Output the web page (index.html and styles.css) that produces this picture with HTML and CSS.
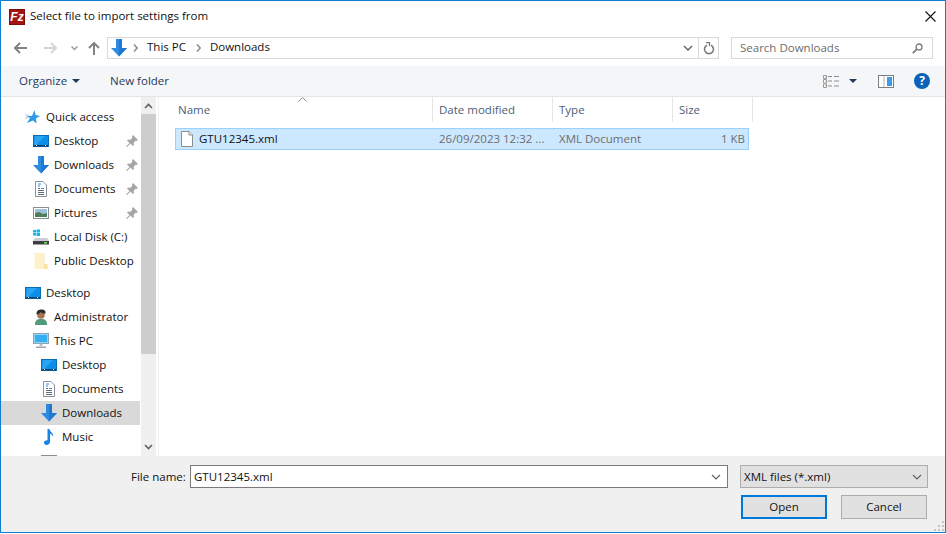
FILE: index.html
```html
<!DOCTYPE html>
<html lang="en">

<head>
    <meta charset="UTF-8">
    <meta name="viewport" content="width=device-width, initial-scale=1.0">
    <title>Select file to import settings from</title>
    <link rel="stylesheet" href="styles.css">
</head>

<body>
    <svg class="iconDefs" aria-hidden="true">
        <symbol id="i-down" viewBox="0 0 16 18">
            <path d="M5 0h6v9h5l-8 8.500-8-8.500h5z" fill="#2f8be0"/>
            <path d="M8 0h3v9h5l-8 8.500z" fill="#1f78d1"/>
        </symbol>
        <symbol id="i-desktop" viewBox="0 0 16 12">
            <rect x="0.500" y="0.500" width="15" height="11" fill="#0c8fe8" stroke="#0a6bb0"/>
            <path d="M2 1h10L3 10H1z" fill="#2aa5f2"/>
            <path d="M1 10h14v1.500H1z" fill="#0a3f6e"/>
            <path d="M3 10.500h1M12 10.500h1" stroke="#fff"/>
        </symbol>
        <symbol id="i-doc" viewBox="0 0 12 16">
            <path d="M.5.500h7.500l3.500 3.500v11.500H.5z" fill="#fff" stroke="#8a9097"/>
            <path d="M3 3h3M3 5h2M6 7.500h3" stroke="#2f8be0"/>
            <path d="M3 7.500h2M3 9.500h6M3 11.500h6M3 13.500h6" stroke="#5f6b78"/>
        </symbol>
        <symbol id="i-pics" viewBox="0 0 16 12">
            <rect x="0.500" y="0.500" width="15" height="11" fill="#fff" stroke="#8a8f94"/>
            <rect x="2" y="2" width="12" height="8" fill="#9cc3dc"/>
            <path d="M2 6l4-1 4 2 4-1v4H2z" fill="#4f7f5a"/>
        </symbol>
        <symbol id="i-disk" viewBox="0 0 16 16">
            <path d="M0 1h3v2.500H0zM3.500.500H7v3H3.500zM0 4h3v2.500H0zM3.500 4H7v3H3.500z" fill="#19b3e6"/>
            <path d="M2 9h12l2 3H0z" fill="#c9ced2"/>
            <rect x="0" y="12" width="16" height="3.500" fill="#3c4043"/>
            <rect x="11" y="13" width="3" height="1.500" fill="#6fe06a"/>
        </symbol>
        <symbol id="i-public" viewBox="0 0 13 16">
            <path d="M0 0h9.500v11H13v5H0z" fill="#fdf1c9"/>
            <path d="M9.500 11H13v5H9.500z" fill="#f5e3a6"/>
            <path d="M9.500 0v11" stroke="#f3e6bb"/>
        </symbol>
        <symbol id="i-user" viewBox="0 0 14 16">
            <path d="M1 16c0-5 2-6 6-6s6 1 6 6z" fill="#4f9a78"/>
            <circle cx="7" cy="6" r="3.800" fill="#a8734f"/>
            <path d="M2.500 5.500C2.500 1 5 .500 7.500.500c3 0 4.500 1.500 4 4-2 0-4-.500-5-1.500-.500 1-2 2.500-4 2.500z" fill="#2b2b2b"/>
        </symbol>
        <symbol id="i-pc" viewBox="0 0 16 16">
            <rect x="0.500" y="0.500" width="15" height="10" fill="#8fd3f7" stroke="#8ea3b3"/>
            <path d="M2 2h12v7H2z" fill="#33b0f0"/>
            <path d="M6.500 11h3v2h-3z" fill="#b9c2c9"/>
            <path d="M3 13.500h10V15H3z" fill="#9aa5ad"/>
        </symbol>
        <symbol id="i-music" viewBox="0 0 10 16">
            <path d="M3.500 0h2c.3 3 4.200 3.500 3.700 8-.7-2-2-3-3.200-3.300V13c0 2-2 3-3.500 3S0 15 0 13.500 1.800 11 3.500 11.300z" fill="#1584e6"/>
        </symbol>
        <symbol id="i-pin" viewBox="0 0 12 12">
            <path d="M7 0l5 5-1 1-1-.500-2.500 2.500.500 2-1 1-2.500-2.500L1 12l-1-.500 3.500-3.500L1 5.500l1-1 2 .500L6.500 2.500 6 1.500z" fill="#a3a6a9"/>
        </symbol>
        <symbol id="i-crumb" viewBox="0 0 5 8">
            <path d="M1 .5L4.200 4 1 7.500" fill="none" stroke="#8a8a8a" stroke-width="1.500"/>
        </symbol>
    </svg>

    <div class="window">
        <header class="titleBar">
            <span class="appLogo">Fz</span>
            <span class="titleText">Select file to import settings from</span>
            <svg class="closeIcon" width="11" height="11" viewBox="0 0 11 11"><path d="M.5.500l10 10M10.500.500l-10 10" stroke="#111" stroke-width="1.100"/></svg>
        </header>

        <div class="navRow">
            <svg class="navBtn navBack" width="13" height="12" viewBox="0 0 13 12"><path d="M6 1L1 6l5 5M1 6h12" fill="none" stroke="#7f8387" stroke-width="2"/></svg>
            <svg class="navBtn navForward" width="13" height="12" viewBox="0 0 13 12"><path d="M7 1l5 5-5 5M12 6H0" fill="none" stroke="#d2d4d6" stroke-width="2"/></svg>
            <svg class="navBtn navRecent" width="7" height="5" viewBox="0 0 7 5"><path d="M.5.500l3 3 3-3" fill="none" stroke="#9a9ea2" stroke-width="1.500"/></svg>
            <svg class="navBtn navUp" width="12" height="13" viewBox="0 0 12 13"><path d="M1 6l5-5 5 5M6 1v12" fill="none" stroke="#7f8387" stroke-width="2"/></svg>
            <div class="addressBox">
                <svg class="addressIcon" width="16" height="18"><use href="#i-down"/></svg>
                <svg class="crumbArrow" width="5" height="8"><use href="#i-crumb"/></svg>
                <span class="crumb">This PC</span>
                <svg class="crumbArrow" width="5" height="8"><use href="#i-crumb"/></svg>
                <span class="crumb">Downloads</span>
                <svg class="addressChevron" width="10" height="6" viewBox="0 0 10 6"><path d="M1 1l4 4 4-4" fill="none" stroke="#6a6a6a" stroke-width="1.500"/></svg>
                <span class="refreshBtn">
                    <svg width="12" height="13" viewBox="0 0 12 13"><path d="M4 3.200a4.500 4.500 0 1 0 4 0" fill="none" stroke="#7a7a7a" stroke-width="1.600"/><path d="M3 .5h3.500V4" fill="none" stroke="#7a7a7a" stroke-width="1.300"/></svg>
                </span>
            </div>
            <div class="searchBox">
                <span>Search Downloads</span>
                <svg width="11" height="11" viewBox="0 0 11 11"><circle cx="7" cy="4" r="3" fill="none" stroke="#7a7a7a" stroke-width="1.300"/><path d="M4.700 6.300L.8 10.200" stroke="#7a7a7a" stroke-width="1.800"/></svg>
            </div>
        </div>

        <div class="toolbar">
            <span class="toolBtn">Organize</span>
            <span class="caretDown organizeCaret"></span>
            <span class="toolBtn newFolder">New folder</span>
            <svg class="viewsIcon" width="16" height="13" viewBox="0 0 16 13">
                <path d="M.5.500h3v3h-3zM.5 4.500h3v3.500h-3zM.5 9h3v3.500h-3z" fill="#fff" stroke="#9a9a9a"/>
                <path d="M5 1.500h4M11 1.500h5M5 6h4M11 6h5M5 11h4M11 11h5" stroke="#8d8d8d"/>
                <path d="M2 2h.5M2 6h.5M2 10.500h.5" stroke="#c9524a"/>
            </svg>
            <span class="caretDown viewsCaret"></span>
            <svg class="paneIcon" width="16" height="13" viewBox="0 0 16 13"><rect x="0.500" y="0.500" width="15" height="12" fill="#fff" stroke="#7f7f7f"/><rect x="9" y="2" width="5" height="9" fill="#3f9be6"/><path d="M6 1v11" stroke="#b5b5b5"/></svg>
            <span class="helpIcon">?</span>
        </div>

        <div class="main">
            <nav class="tree">
                <div class="treeRow lvl0"><svg class="treeIcon" width="16" height="16" viewBox="0 0 16 16"><path d="M9.500 1l1 5 4.500 1-4 2.500.5 5-3.500-3-6 2.500 3-5L1 7h6z" fill="#2f9be6"/><path d="M0 6h4M0 9h3" stroke="#9fd0f2"/></svg><span>Quick access</span></div>
                <div class="treeRow lvl1"><svg class="treeIcon" width="16" height="12"><use href="#i-desktop"/></svg><span>Desktop</span><svg class="pin" width="12" height="12"><use href="#i-pin"/></svg></div>
                <div class="treeRow lvl1"><svg class="treeIcon" width="16" height="18"><use href="#i-down"/></svg><span>Downloads</span><svg class="pin" width="12" height="12"><use href="#i-pin"/></svg></div>
                <div class="treeRow lvl1"><svg class="treeIcon" width="16" height="16"><use href="#i-doc"/></svg><span>Documents</span><svg class="pin" width="12" height="12"><use href="#i-pin"/></svg></div>
                <div class="treeRow lvl1"><svg class="treeIcon" width="16" height="12"><use href="#i-pics"/></svg><span>Pictures</span><svg class="pin" width="12" height="12"><use href="#i-pin"/></svg></div>
                <div class="treeRow lvl1"><svg class="treeIcon" width="16" height="16"><use href="#i-disk"/></svg><span>Local Disk (C:)</span></div>
                <div class="treeRow lvl1"><svg class="treeIcon" width="16" height="16"><use href="#i-public"/></svg><span>Public Desktop</span></div>
                <div class="treeRow lvl0 groupStart"><svg class="treeIcon" width="16" height="12"><use href="#i-desktop"/></svg><span>Desktop</span></div>
                <div class="treeRow lvl1"><svg class="treeIcon" width="16" height="16"><use href="#i-user"/></svg><span>Administrator</span></div>
                <div class="treeRow lvl1"><svg class="treeIcon" width="16" height="16"><use href="#i-pc"/></svg><span>This PC</span></div>
                <div class="treeRow lvl2"><svg class="treeIcon" width="16" height="12"><use href="#i-desktop"/></svg><span>Desktop</span></div>
                <div class="treeRow lvl2"><svg class="treeIcon" width="16" height="16"><use href="#i-doc"/></svg><span>Documents</span></div>
                <div class="treeRow lvl2 selected"><svg class="treeIcon" width="16" height="18"><use href="#i-down"/></svg><span>Downloads</span></div>
                <div class="treeRow lvl2"><svg class="treeIcon" width="16" height="16"><use href="#i-music"/></svg><span>Music</span></div>
                <div class="treeRow lvl2"><svg class="treeIcon" width="16" height="12"><use href="#i-pics"/></svg></div>
            </nav>

            <div class="scrollbar">
                <svg class="scrollArrow" width="9" height="6" viewBox="0 0 9 6"><path d="M1 5l3.500-3.500L8 5" fill="none" stroke="#606060" stroke-width="1.600"/></svg>
                <div class="scrollThumb"></div>
                <svg class="scrollArrow scrollArrowDown" width="9" height="6" viewBox="0 0 9 6"><path d="M1 1l3.500 3.500L8 1" fill="none" stroke="#606060" stroke-width="1.600"/></svg>
            </div>

            <section class="fileList">
                <svg class="sortCaret" width="9" height="5" viewBox="0 0 9 5"><path d="M.5 4.500l4-4 4 4" fill="none" stroke="#8a8a8a"/></svg>
                <div class="listHeader">
                    <div class="col colName">Name</div>
                    <div class="col colDate">Date modified</div>
                    <div class="col colType">Type</div>
                    <div class="col colSize">Size</div>
                </div>
                <div class="fileRow">
                    <div class="cell cellName">
                        <svg width="12" height="16" viewBox="0 0 12 16"><path d="M.5.500h7.500l3.500 3.500v11.500H.5z" fill="#fff" stroke="#8f8f8f"/><path d="M8 .5v3.500h3.500" fill="#f2f2f2" stroke="#8f8f8f"/></svg>
                        <span>GTU12345.xml</span>
                    </div>
                    <div class="cell">26/09/2023 12:32 ...</div>
                    <div class="cell">XML Document</div>
                    <div class="cell cellSize">1 KB</div>
                </div>
            </section>
        </div>

        <footer class="footer">
            <div class="nameRow">
                <label class="nameLabel">File name:</label>
                <div class="nameInput">
                    <span>GTU12345.xml</span>
                    <svg width="10" height="6" viewBox="0 0 10 6"><path d="M1 1l4 4 4-4" fill="none" stroke="#606060" stroke-width="1.200"/></svg>
                </div>
                <div class="filterSelect">
                    <span>XML files (*.xml)</span>
                    <svg width="10" height="6" viewBox="0 0 10 6"><path d="M1 1l4 4 4-4" fill="none" stroke="#606060" stroke-width="1.200"/></svg>
                </div>
            </div>
            <div class="buttonRow">
                <button class="dlgBtn dlgBtnDefault">Open</button>
                <button class="dlgBtn">Cancel</button>
            </div>
            <svg class="resizeGrip" width="11" height="11" viewBox="0 0 11 11"><path d="M8 0h2v2H8zM4 4h2v2H4zM8 4h2v2H8zM0 8h2v2H0zM4 8h2v2H4zM8 8h2v2H8z" fill="#c4c4c4"/></svg>
        </footer>
    </div>
</body>

</html>
```

FILE: styles.css
```css
html, body {
    margin: 0;
    background: #fff;
}

body {
    font-family: "Open Sans", "Liberation Sans", sans-serif;
    font-size: 11.5px;
    color: #111;
}

.iconDefs {
    display: none;
}

.window {
    position: relative;
    box-sizing: border-box;
    width: 946px;
    height: 533px;
    border: 1px solid #0f7fd4;
    display: flex;
    flex-direction: column;
    overflow: hidden;
}

/* title bar */
.titleBar {
    height: 31px;
    flex: none;
    display: flex;
    align-items: center;
    padding: 0 9px 0 8px;
}

.appLogo {
    width: 16px;
    height: 16px;
    background: #a41414;
    color: #fff;
    font-family: "Liberation Sans", sans-serif;
    font-size: 12px;
    font-weight: bold;
    font-style: italic;
    line-height: 16px;
    text-align: center;
    box-shadow: inset 0 0 0 1px #7d0d0d;
}

.titleText {
    margin-left: 5px;
    padding-bottom: 2px;
}

.closeIcon {
    margin-left: auto;
}

/* back / forward row */
.navRow {
    height: 22px;
    margin-top: 5px;
    flex: none;
    display: flex;
    align-items: center;
}

.navBack {
    margin-left: 13px;
}

.navForward {
    margin-left: 17px;
}

.navRecent {
    margin-left: 14px;
}

.navUp {
    margin-left: 10px;
}

.addressBox {
    box-sizing: border-box;
    width: 612px;
    height: 22px;
    margin-left: 7px;
    border: 1px solid #d9d9d9;
    display: flex;
    align-items: center;
}

.addressIcon {
    margin-left: 3px;
}

.crumbArrow {
    flex: none;
    margin: 0 9px 0 6px;
}

.crumb {
    padding: 0 4px 4px 0;
}

.addressChevron {
    margin-left: auto;
    margin-right: 5px;
}

.refreshBtn {
    width: 19px;
    height: 100%;
    border-left: 1px solid #d9d9d9;
    display: flex;
    align-items: center;
    justify-content: center;
}

.searchBox {
    box-sizing: border-box;
    width: 202px;
    height: 22px;
    margin-left: 12px;
    padding: 0 9px 0 8px;
    border: 1px solid #d9d9d9;
    display: flex;
    align-items: center;
    justify-content: space-between;
    color: #6d6d6d;
}

.searchBox span {
    padding-bottom: 2px;
}

/* command bar */
.toolbar {
    height: 31px;
    margin-top: 7px;
    flex: none;
    box-sizing: border-box;
    background: #f5f6f7;
    border-bottom: 1px solid #e5e5e5;
    display: flex;
    align-items: center;
}

.toolBtn {
    padding-bottom: 1px;
    color: #1e3a5c;
}

.toolbar > .toolBtn:first-child {
    margin-left: 18px;
}

.caretDown {
    width: 0;
    height: 0;
    border-top: 4px solid #1e3a5c;
    border-left: 4px solid transparent;
    border-right: 4px solid transparent;
}

.organizeCaret {
    margin-left: 5px;
}

.newFolder {
    margin-left: 30px;
}

.viewsIcon {
    margin-left: auto;
}

.viewsCaret {
    margin-left: 10px;
}

.paneIcon {
    margin-left: 21px;
}

.helpIcon {
    width: 16px;
    height: 16px;
    margin: 0 15px 0 20px;
    border-radius: 50%;
    background: #0a63b8;
    color: #fff;
    font-size: 12px;
    font-weight: bold;
    line-height: 16px;
    text-align: center;
}

/* main area */
.main {
    flex: 1;
    min-height: 0;
    display: flex;
}

.tree {
    width: 139px;
    margin-right: 1px;
    flex: none;
    padding-top: 8px;
    box-sizing: border-box;
    overflow: hidden;
}

.treeRow {
    box-sizing: border-box;
    height: 24px;
    display: flex;
    align-items: center;
    padding-right: 2px;
    white-space: nowrap;
}

.treeRow span {
    padding-bottom: 2px;
}

.treeRow.lvl0 {
    padding-left: 24px;
}

.treeRow.lvl1 {
    padding-left: 32px;
}

.treeRow.lvl2 {
    padding-left: 40px;
}

.treeRow.groupStart {
    margin-top: 8px;
}

.treeRow.selected {
    background: #d9d9d9;
}

.treeIcon {
    flex: none;
    margin-right: 5px;
}

.pin {
    margin-left: auto;
    flex: none;
}

.scrollbar {
    width: 15px;
    flex: none;
    background: #f0f0f0;
    display: flex;
    flex-direction: column;
    align-items: center;
}

.scrollArrow {
    flex: none;
    margin-top: 6px;
}

.scrollThumb {
    width: 100%;
    height: 240px;
    margin-top: 5px;
    background: #cdcdcd;
}

.scrollArrowDown {
    margin-top: auto;
    margin-bottom: 6px;
}

.fileList {
    position: relative;
    flex: 1;
    margin-left: 2px;
    padding-left: 13px;
    border-left: 1px solid #f0f0f0;
}

.sortCaret {
    position: absolute;
    left: 139px;
    top: 0;
}

.listHeader {
    display: grid;
    grid-template-columns: 261px 120px 120px 80px;
    height: 25px;
}

.col {
    box-sizing: border-box;
    padding-left: 6px;
    line-height: 25px;
    color: #4c607a;
    border-right: 1px solid #e5e5e5;
}

.fileRow {
    box-sizing: border-box;
    display: grid;
    grid-template-columns: 257px 120px 120px 75px;
    align-items: center;
    width: 574px;
    height: 22px;
    margin: 6px 0 0 3px;
    background: #cce8ff;
    border: 1px solid #99d1ff;
    color: #6d6d6d;
}

.cell {
    padding: 0 0 2px 6px;
    white-space: nowrap;
}

.cellName {
    display: flex;
    align-items: center;
    gap: 6px;
    padding: 0 0 0 5px;
    color: #111;
}

.cellName span {
    padding-bottom: 2px;
}

.cellSize {
    padding: 0 3px 2px 0;
    text-align: right;
}

/* bottom part */
.footer {
    position: relative;
    height: 76px;
    flex: none;
    box-sizing: border-box;
    background: #f0f0f0;
    padding: 9px 17px 0 130px;
}

.nameRow {
    display: flex;
    align-items: center;
    height: 23px;
}

.nameLabel {
    width: 59px;
    flex: none;
}

.nameInput {
    box-sizing: border-box;
    width: 538px;
    height: 23px;
    background: #fff;
    border: 1px solid #7a7a7a;
    padding: 0 6px 0 3px;
    display: flex;
    align-items: center;
    justify-content: space-between;
}

.filterSelect {
    box-sizing: border-box;
    width: 188px;
    height: 23px;
    margin-left: 12px;
    background: #e1e1e1;
    border: 1px solid #adadad;
    padding: 0 5px 0 3px;
    display: flex;
    align-items: center;
    justify-content: space-between;
}

.buttonRow {
    display: flex;
    justify-content: flex-end;
    gap: 14px;
    margin: 7px 1px 0 0;
}

.dlgBtn {
    box-sizing: border-box;
    width: 86px;
    height: 24px;
    padding: 0 0 2px;
    background: #e1e1e1;
    border: 1px solid #adadad;
    border-radius: 0;
    font-family: inherit;
    font-size: inherit;
    color: #111;
}

.dlgBtnDefault {
    border: 2px solid #0078d7;
}

.resizeGrip {
    position: absolute;
    right: 0;
    bottom: 0;
}
```
